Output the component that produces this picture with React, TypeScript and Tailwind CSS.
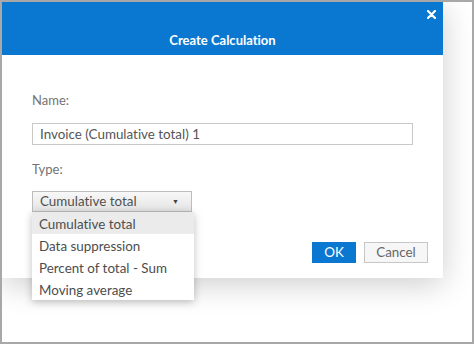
const TYPES = ["Cumulative total", "Data suppression", "Percent of total - Sum", "Moving average"];

export default function App() {
  const selected = TYPES[0];

  return (
    <div
      className="w-[474px] h-[344px] border-2 border-[#a8a8a8] bg-white overflow-hidden [font-variant-ligatures:none]"
      style={{ fontFamily: "Lato, 'Open Sans', sans-serif" }}
    >
      {/* Dialog */}
      <div className="relative w-[441px] h-[276px] bg-white shadow-[0_6px_30px_rgba(0,0,0,0.2)] flex flex-col">
        <div className="relative h-[53px] bg-[#0a78d1] text-white">
          <button className="absolute right-[6px] top-[6px] w-[12px] h-[12px] flex items-center justify-center">
            <svg width="9" height="9" viewBox="0 0 9 9">
              <path d="M1 1 L8 8 M8 1 L1 8" stroke="white" strokeWidth="2.2" strokeLinecap="round" />
            </svg>
          </button>
          <h2 className="pt-[30px] text-center text-[13px] leading-[16px] font-bold">Create Calculation</h2>
        </div>

        <div className="flex-1 flex flex-col px-[30px] pt-[37px]">
          <label className="text-[13px] leading-[16px] text-[#737373]">Name:</label>
          <div className="mt-[15px] w-[381px] h-[22px] border border-[#c9c9c9] flex items-center px-[7px] text-[13.4px] text-[#555]">
            Invoice (Cumulative total) 1
          </div>

          <label className="mt-[16px] text-[13px] leading-[16px] text-[#737373]">Type:</label>
          <div className="relative mt-[14px] w-[160px]">
            <div className="h-[21px] border border-[#bdbdbd] bg-gradient-to-b from-[#f8f8f8] to-[#e4e4e4] flex items-center justify-between pl-[7px] pr-[12px] text-[13.4px] text-[#505050]">
              <span>{selected}</span>
              <span className="text-[7px] text-[#444]">▼</span>
            </div>
            <ul className="absolute z-10 left-0 top-[21px] w-[162px] bg-white shadow-[0_2px_8px_rgba(0,0,0,0.25)] text-[13.4px] text-[#4d4d4d]">
              {TYPES.map((t) => (
                <li
                  key={t}
                  className={`h-[22px] flex items-center px-[7px] pt-[2px] ${t === selected ? "bg-[#ebebeb]" : ""}`}
                >
                  {t}
                </li>
              ))}
            </ul>
          </div>

          <div className="mt-[30px] -mr-[15px] flex justify-end gap-[8px]">
            <button className="w-[44px] h-[21px] bg-[#0a78d1] text-white text-[13.4px] leading-none">OK</button>
            <button className="w-[64px] h-[21px] bg-[#f6f6f6] border border-[#c7c7c7] text-[#666] text-[13.4px] leading-none">
              Cancel
            </button>
          </div>
        </div>
      </div>
    </div>
  );
}
